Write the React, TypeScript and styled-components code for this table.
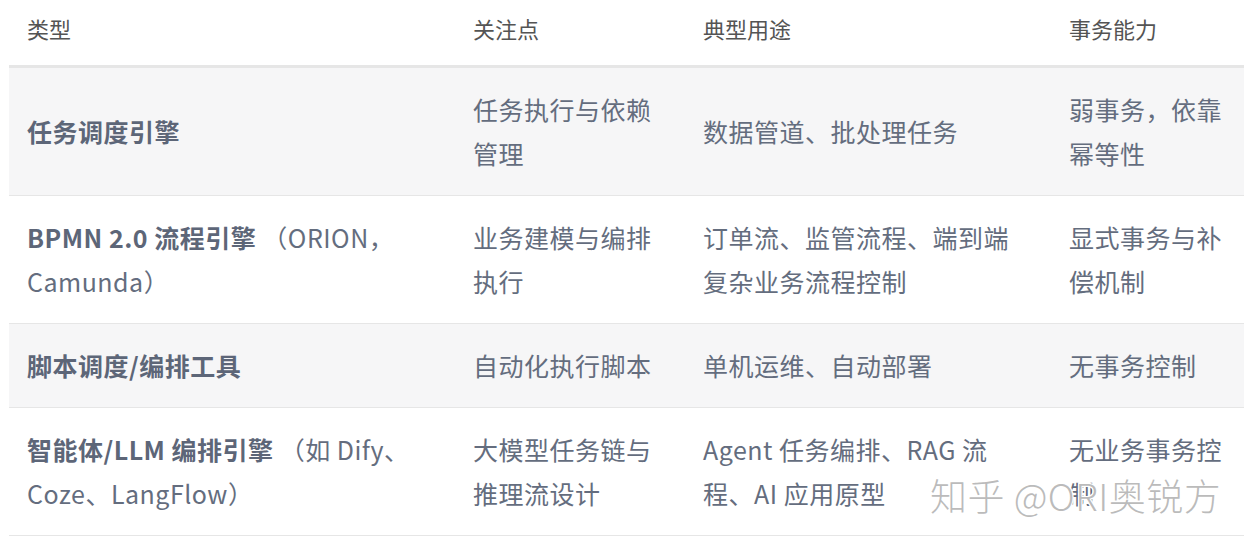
import React from "react";
import styled, { createGlobalStyle } from "styled-components";

const GlobalStyle = createGlobalStyle`
  html, body {
    margin: 0;
    padding: 0;
    background: #ffffff;
  }
  body {
    font-family: "Noto Sans CJK SC", "Noto Sans", sans-serif;
  }
`;

const Page = styled.div`
  position: relative;
  width: 1256px;
  height: 548px;
  padding: 0 12px 0 9px;
  box-sizing: border-box;
  overflow: hidden;
  background: #fff;
`;

const Table = styled.table`
  width: 1235px;
  border-collapse: collapse;
  table-layout: fixed;
`;

const Col = styled.col<{ $w: number }>`
  width: ${(p) => p.$w}px;
`;

const HeadCell = styled.th`
  text-align: left;
  font-weight: 400;
  font-size: 22px;
  line-height: 44px;
  color: #545454;
  padding: 6px 18px 15px 18px;
  border-bottom: 3px solid #e6e6e6;
  vertical-align: middle;
`;

const Row = styled.tr<{ $shade: boolean }>`
  background: ${(p) => (p.$shade ? "#f6f6f7" : "#ffffff")};
  border-bottom: 1px solid #e6e6e6;
`;

const Cell = styled.td`
  font-size: 25px;
  line-height: 44px;
  letter-spacing: 0.5px;
  color: #646d7e;
  padding: 19px 24px 20px 18px;
  vertical-align: middle;
  word-break: normal;
  overflow-wrap: break-word;

  &:last-child {
    padding-right: 10px;
  }
`;

const Strong = styled.strong`
  font-weight: 700;
  color: #5d6678;
`;

const Watermark = styled.div`
  position: absolute;
  left: 930px;
  top: 469px;
  font-family: "Noto Sans CJK SC", "Noto Sans", sans-serif;
  font-size: 37px;
  font-weight: 300;
  line-height: 52px;
  color: rgba(165, 165, 165, 0.75);
  letter-spacing: 0.5px;
  white-space: nowrap;
  text-shadow: 1px 1px 0 #ffffff, -1px -1px 0 #ffffff, 1px -1px 0 #ffffff,
    -1px 1px 0 #ffffff;
  pointer-events: none;
`;

type RowData = {
  type: React.ReactNode;
  focus: string;
  usage: string;
  tx: string;
};

const rows: RowData[] = [
  {
    type: <Strong>任务调度引擎</Strong>,
    focus: "任务执行与依赖管理",
    usage: "数据管道、批处理任务",
    tx: "弱事务，依靠幂等性",
  },
  {
    type: (
      <>
        <Strong>BPMN 2.0 流程引擎</Strong> （ORION，Camunda）
      </>
    ),
    focus: "业务建模与编排执行",
    usage: "订单流、监管流程、端到端复杂业务流程控制",
    tx: "显式事务与补偿机制",
  },
  {
    type: <Strong>脚本调度/编排工具</Strong>,
    focus: "自动化执行脚本",
    usage: "单机运维、自动部署",
    tx: "无事务控制",
  },
  {
    type: (
      <>
        <Strong>智能体/LLM 编排引擎</Strong> （如 Dify、Coze、LangFlow）
      </>
    ),
    focus: "大模型任务链与推理流设计",
    usage: "Agent 任务编排、RAG 流程、AI 应用原型",
    tx: "无业务事务控制",
  },
];

export default function App() {
  return (
    <>
      <GlobalStyle />
      <Page>
        <Table>
          <colgroup>
            <Col $w={446} />
            <Col $w={230} />
            <Col $w={366} />
            <Col $w={193} />
          </colgroup>
          <thead>
            <tr>
              <HeadCell>类型</HeadCell>
              <HeadCell>关注点</HeadCell>
              <HeadCell>典型用途</HeadCell>
              <HeadCell>事务能力</HeadCell>
            </tr>
          </thead>
          <tbody>
            {rows.map((r, i) => (
              <Row key={i} $shade={i % 2 === 0}>
                <Cell>{r.type}</Cell>
                <Cell>{r.focus}</Cell>
                <Cell>{r.usage}</Cell>
                <Cell>{r.tx}</Cell>
              </Row>
            ))}
          </tbody>
        </Table>
        <Watermark>知乎 @ORI奥锐方</Watermark>
      </Page>
    </>
  );
}
